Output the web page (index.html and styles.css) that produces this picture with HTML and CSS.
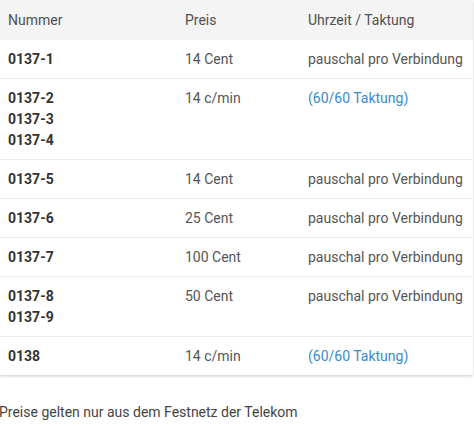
FILE: index.html
```html
<!DOCTYPE html>
<html lang="de">
<head>
<meta charset="utf-8">
<title>Preise 0137</title>
<link rel="stylesheet" href="styles.css">
</head>
<body>
<div class="card">
  <table class="prices">
    <colgroup>
      <col class="c-num">
      <col class="c-price">
      <col class="c-time">
    </colgroup>
    <thead>
      <tr><th>Nummer</th><th>Preis</th><th>Uhrzeit / Taktung</th></tr>
    </thead>
    <tbody>
      <tr><td class="num">0137-1</td><td>14 Cent</td><td>pauschal pro Verbindung</td></tr>
      <tr><td class="num">0137-2<br>0137-3<br>0137-4</td><td>14 c/min</td><td class="link">(60/60 Taktung)</td></tr>
      <tr><td class="num">0137-5</td><td>14 Cent</td><td>pauschal pro Verbindung</td></tr>
      <tr><td class="num">0137-6</td><td>25 Cent</td><td>pauschal pro Verbindung</td></tr>
      <tr><td class="num">0137-7</td><td>100 Cent</td><td>pauschal pro Verbindung</td></tr>
      <tr><td class="num">0137-8<br>0137-9</td><td>50 Cent</td><td>pauschal pro Verbindung</td></tr>
      <tr class="last"><td class="num">0138</td><td>14 c/min</td><td class="link">(60/60 Taktung)</td></tr>
    </tbody>
  </table>
</div>
<p class="note">Preise gelten nur aus dem Festnetz der Telekom</p>
</body>
</html>
```
FILE: styles.css
```css
html, body {
  margin: 0;
  padding: 0;
  background: #ffffff;
}
body {
  font-family: Roboto, "Liberation Sans", sans-serif;
  font-size: 14px;
  color: #555555;
}
.card {
  width: 473px;
  background: #ffffff;
  box-shadow: 0 1px 3px rgba(0, 0, 0, 0.22);
}
.prices {
  width: 100%;
  border-collapse: collapse;
  table-layout: fixed;
}
.c-num { width: 185px; }
.c-price { width: 123px; }
.prices th,
.prices td {
  text-align: left;
  vertical-align: top;
  line-height: 21px;
  padding: 9px 0 8px 0;
  border-bottom: 1px solid #ebebeb;
}
.prices th:first-child,
.prices td:first-child {
  padding-left: 8px;
}
.prices thead th {
  background: #f4f4f4;
  font-weight: 400;
  color: #505050;
  padding-top: 10px;
  padding-bottom: 9px;
  border-bottom: none;
}
.prices tr.last td {
  border-bottom: none;
}
.num {
  font-weight: 700;
  color: #333333;
}
.link {
  color: #3a8bc9;
}
.note {
  margin: 27px 0 0 -1px;
  line-height: 21px;
  color: #444444;
}
```
